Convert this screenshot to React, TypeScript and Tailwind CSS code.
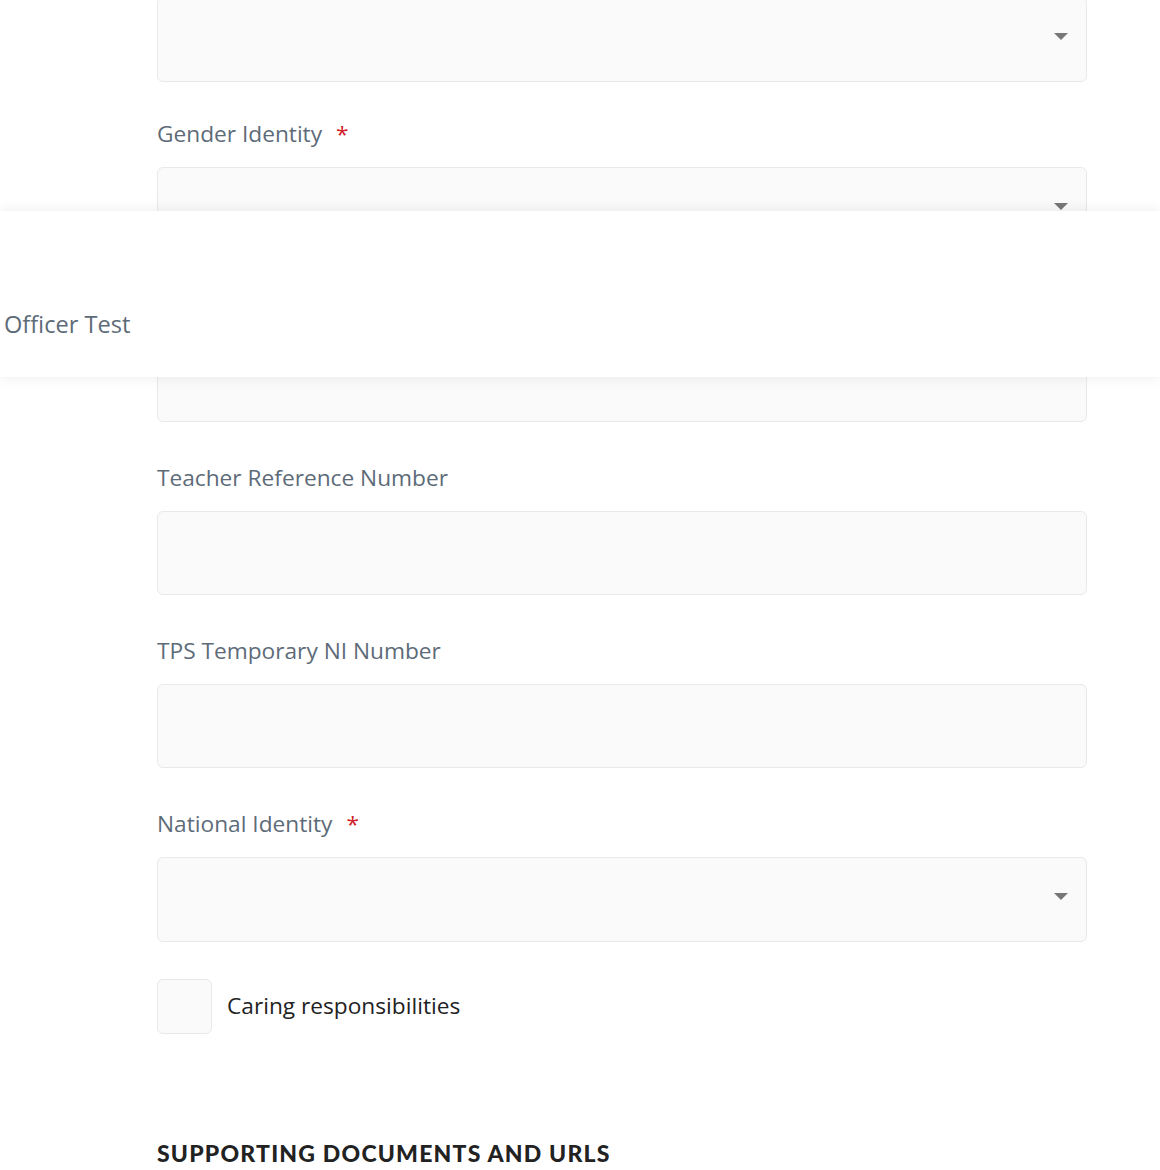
import React from "react";

const font = { fontFamily: '"Open Sans", "Liberation Sans", sans-serif' };

function Arrow() {
  return (
    <svg width="14" height="7" viewBox="0 0 14 7" className="absolute right-[18px] top-[35px]">
      <path d="M0 0 L14 0 L7 7 Z" fill="#777" />
    </svg>
  );
}

function Label({ text, required }: { text: string; required?: boolean }) {
  return (
    <div className="text-[22.7px] leading-[33px] text-[#5d6b78] mb-[16px] -mt-[1px] pb-[1px]">
      {text}
      {required && <span className="text-[#d0202a] ml-[14px]">*</span>}
    </div>
  );
}

function SelectField({ label, required, first }: { label?: string; required?: boolean; first?: boolean }) {
  return (
    <div className={first ? "-mt-[3px] mb-[36px]" : "mb-[37px]"}>
      {label && <Label text={label} required={required} />}
      <div className="relative h-[85px] rounded-[6px] border border-[#e9e9e9] bg-[#fafafa]">
        <Arrow />
      </div>
    </div>
  );
}

function InputField({ label, required }: { label: string; required?: boolean }) {
  return (
    <div className="mb-[40px]">
      <Label text={label} required={required} />
      <div className="h-[84px] rounded-[6px] border border-[#e9e9e9] bg-[#fafafa]" />
    </div>
  );
}

export default function App() {
  return (
    <div className="relative w-[1160px] h-[1170px] overflow-hidden bg-white" style={font}>
      <div className="ml-[157px] w-[930px]">
        <SelectField first />
        <SelectField label="Gender Identity" required />
        <InputField label="Preferred Name" />
        <InputField label="Teacher Reference Number" />
        <InputField label="TPS Temporary NI Number" />
        <SelectField label="National Identity" required />
        <div className="flex items-center gap-[15px]">
          <div className="w-[55px] h-[55px] rounded-[6px] border border-[#e9e9e9] bg-[#fafafa]" />
          <span className="text-[22.7px] leading-[33px] text-[#222] -mt-[2px]">Caring responsibilities</span>
        </div>
        <h2
          className="mt-[104px] text-[23px] leading-[30px] font-black text-[#222] tracking-[1.2px]"
          style={{ fontFamily: '"Lato", "Open Sans", sans-serif' }}
        >
          SUPPORTING DOCUMENTS AND URLS
        </h2>
      </div>
      <div className="absolute left-0 right-0 top-[211px] h-[166px] bg-white shadow-[0_0_14px_rgba(0,0,0,0.08)] flex items-end pl-[4px] pb-[36px]">
        <span className="text-[23.6px] leading-[33px] text-[#5d6b78]">Officer Test</span>
      </div>
    </div>
  );
}
